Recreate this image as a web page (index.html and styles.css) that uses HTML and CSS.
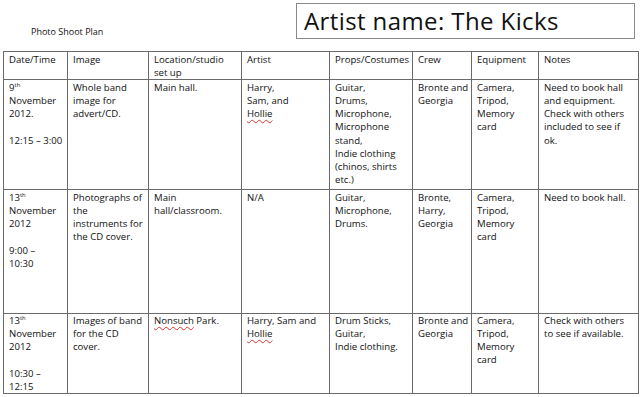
FILE: index.html
```html
<!DOCTYPE html>
<html>
<head>
<meta charset="utf-8">
<link rel="stylesheet" href="styles.css">
</head>
<body>
<div class="page">
  <header class="top">
    <div class="plan">Photo Shoot Plan</div>
    <div class="title">Artist name: The Kicks</div>
  </header>
  <table class="sheet">
    <colgroup>
      <col class="c1"><col class="c2"><col class="c3"><col class="c4"><col class="c5"><col class="c6"><col class="c7"><col class="c8">
    </colgroup>
    <tr class="head">
      <td>Date/Time</td>
      <td>Image</td>
      <td>Location/studio<br>set up</td>
      <td>Artist</td>
      <td>Props/Costumes</td>
      <td>Crew</td>
      <td>Equipment</td>
      <td>Notes</td>
    </tr>
    <tr class="r1">
      <td>9<sup>th</sup><br>November<br>2012.<br><br>12:15 – 3:00</td>
      <td>Whole band<br>image for<br>advert/CD.</td>
      <td>Main hall.</td>
      <td>Harry,<br>Sam, and<br><span class="sp">Hollie</span></td>
      <td>Guitar,<br>Drums,<br>Microphone,<br>Microphone<br>stand,<br>Indie clothing<br>(chinos, shirts<br>etc.)</td>
      <td>Bronte and<br>Georgia</td>
      <td>Camera,<br>Tripod,<br>Memory<br>card</td>
      <td>Need to book hall<br>and equipment.<br>Check with others<br>included to see if<br>ok.</td>
    </tr>
    <tr class="r2">
      <td>13<sup>th</sup><br>November<br>2012<br><br>9:00 –<br>10:30</td>
      <td>Photographs of<br>the<br>instruments for<br>the CD cover.</td>
      <td>Main<br>hall/classroom.</td>
      <td>N/A</td>
      <td>Guitar,<br>Microphone,<br>Drums.</td>
      <td>Bronte,<br>Harry,<br>Georgia</td>
      <td>Camera,<br>Tripod,<br>Memory<br>card</td>
      <td>Need to book hall.</td>
    </tr>
    <tr class="r3">
      <td>13<sup>th</sup><br>November<br>2012<br><br>10:30 –<br>12:15</td>
      <td>Images of band<br>for the CD<br>cover.</td>
      <td><span class="sp">Nonsuch</span> Park.</td>
      <td>Harry, Sam and<br><span class="sp">Hollie</span></td>
      <td>Drum Sticks,<br>Guitar,<br>Indie clothing.</td>
      <td>Bronte and<br>Georgia</td>
      <td>Camera,<br>Tripod,<br>Memory<br>card</td>
      <td>Check with others<br>to see if available.</td>
    </tr>
  </table>
</div>
</body>
</html>
```

FILE: styles.css
```css
html, body {
  margin: 0;
  padding: 0;
  background: #ffffff;
}

body {
  font-family: "Open Sans", "DejaVu Sans", sans-serif;
  color: #111;
  width: 640px;
  height: 397px;
  overflow: hidden;
}

.page {
  padding: 3px 2px 0 3px;
}

.top {
  display: flex;
  justify-content: space-between;
  align-items: flex-start;
  height: 48px;
}

.plan {
  font-size: 9px;
  margin: 22px 0 0 28px;
}

.title {
  width: 330px;
  height: 34px;
  border: 1px solid #8a8a8a;
  font-size: 24px;
  line-height: 34px;
  padding-left: 7px;
  margin-right: 3px;
  box-sizing: content-box;
  letter-spacing: 0.4px;
}

.sheet {
  border-collapse: collapse;
  table-layout: fixed;
  width: 635px;
  font-size: 9.6px;
  line-height: 13.1px;
}

.c1 { width: 64px; }
.c2 { width: 81px; }
.c3 { width: 93px; }
.c4 { width: 88px; }
.c5 { width: 83px; }
.c6 { width: 59px; }
.c7 { width: 67px; }
.c8 { width: 100px; }

.sheet td {
  border: 1px solid #6a6a6a;
  vertical-align: top;
  padding: 0 3px 0 5px;
  white-space: nowrap;
  overflow: hidden;
}

.head { height: 25px; }
.head td { padding-top: 1px; }
.r1 td, .r2 td { padding-top: 1px; }
.r1 { height: 110px; }
.r2 { height: 124px; }
.r3 { height: 78px; }

sup {
  font-size: 6px;
  line-height: 0;
  vertical-align: 4px;
}

.sp {
  text-decoration: underline wavy #d33;
  text-decoration-thickness: 1px;
  text-underline-offset: 2px;
}
```
